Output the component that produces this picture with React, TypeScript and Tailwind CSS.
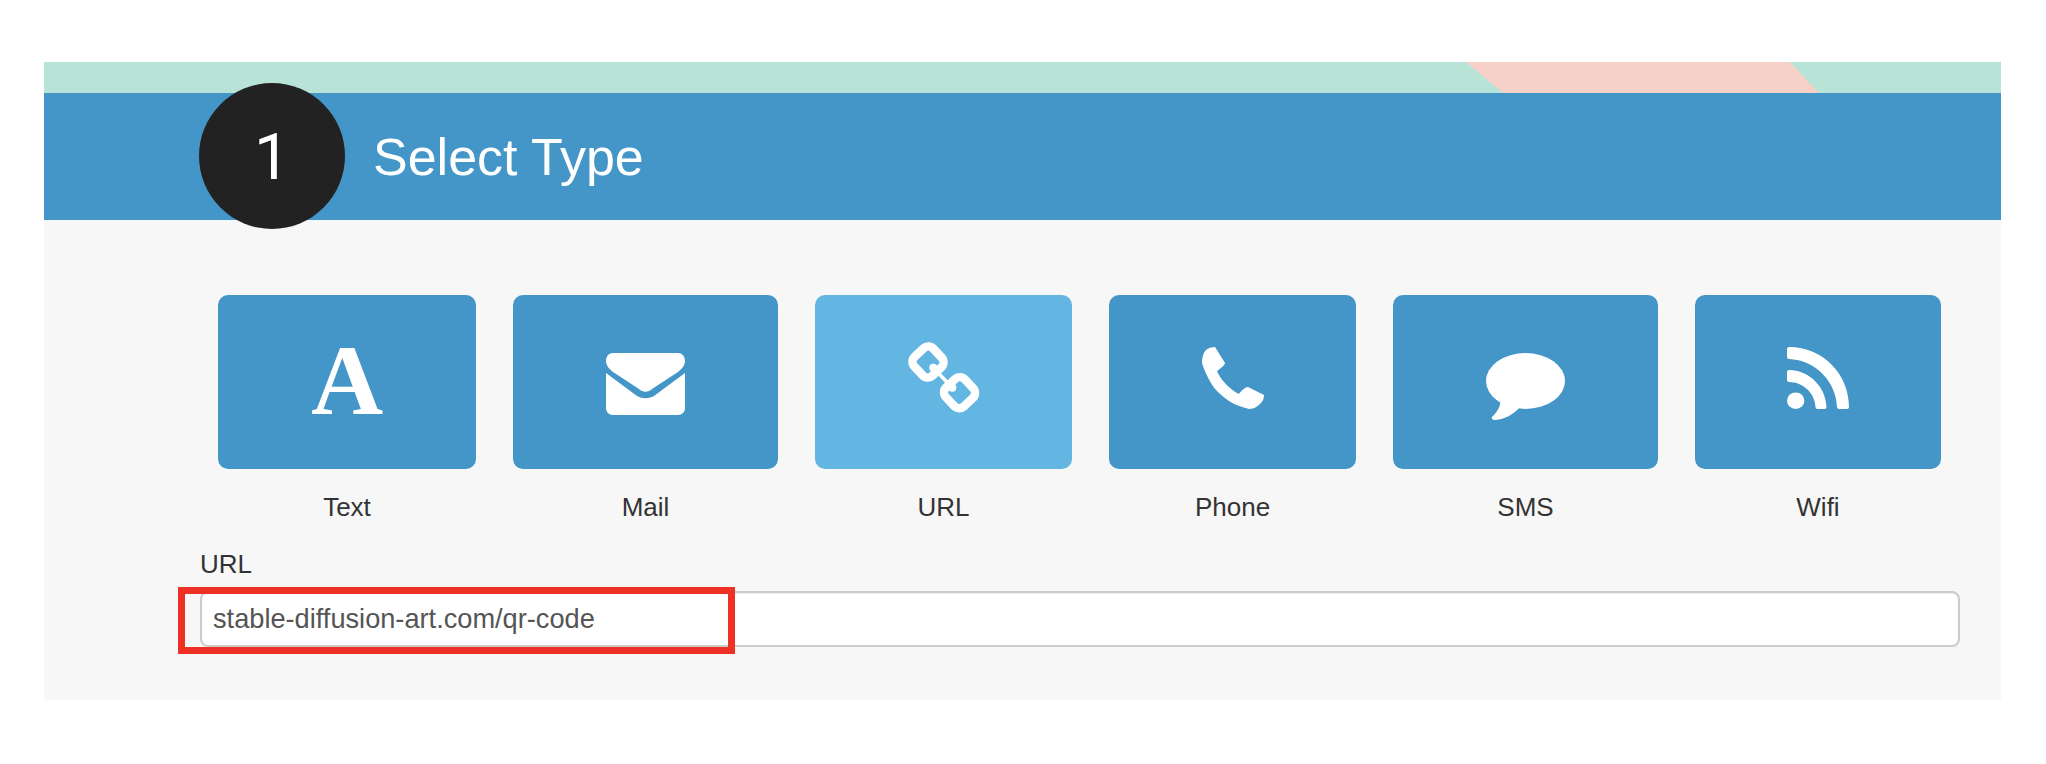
import React from "react";

function MailIcon() {
  return (
    <svg width="79" height="62" viewBox="0 0 79 62" fill="#fff">
      <path d="M7 0H72C76 0 79 3 79 8C79 12 76 16 72 19L46 36C42 39.5 37 39.5 33 36L7 19C3 16 0 12 0 8C0 3 3 0 7 0Z" />
      <path d="M0 20L29 41.5C35 46.5 44 46.5 50 41.5L79 20V55C79 59 76 62 72 62H7C3 62 0 59 0 55Z" />
    </svg>
  );
}

function LinkIcon() {
  return (
    <svg width="72" height="72" viewBox="0 0 72 72" fill="none" stroke="#fff">
      <rect x="7" y="7" width="26" height="26" rx="7" strokeWidth="8.5" transform="rotate(47 20 20)" />
      <rect x="38.5" y="37.7" width="26" height="26" rx="7" strokeWidth="8.5" transform="rotate(47 51.5 50.7)" />
      <path d="M25.3 25.7L44.3 45.7" strokeWidth="3.5" />
      <circle cx="25.3" cy="25.7" r="4" fill="#fff" stroke="none" />
      <circle cx="44.3" cy="45.7" r="4" fill="#fff" stroke="none" />
    </svg>
  );
}

function PhoneIcon() {
  return (
    <svg width="62" height="62" viewBox="0 0 62 62" fill="#fff">
      <path d="M4 3C6 1 10 0 13 0L23 16C23 18 18 22 15 24C18 32 28 43 37 47C39 44 43 40 46 40L62 48C62 51 61 54 59 56C56 59 52 62 47 62C40 60 33 58 27 54C20 49 12 42 9 36C5 29 2 23 0 16C0 11 1 6 4 3Z" />
    </svg>
  );
}

function SmsIcon() {
  return (
    <svg width="79" height="67" viewBox="0 0 79 67" fill="#fff">
      <ellipse cx="39.5" cy="28" rx="39.5" ry="28" />
      <path d="M14 48C15 54 10 60 6 64C5 66 7 67 9 67C19 66 27 62 34 54Z" />
    </svg>
  );
}

function WifiIcon() {
  return (
    <svg width="62" height="62" viewBox="0 0 62 62" fill="#fff">
      <path d="M2 0C36 0 62 27 62 60C62 61 61 62 60 62H52C51 62 50 61 50 60C49 34 28 13 2 12C1 12 0 11 0 10V2C0 1 1 0 2 0Z" />
      <path d="M2 23C22 23 39 40 39.5 60C39.5 61 38.5 62 37.5 62H30.5C29.5 62 28.5 61 28.5 60C28 46 16 35 2 35C1 35 0 34 0 33V25C0 24 1 23 2 23Z" />
      <ellipse cx="8.7" cy="53.7" rx="8.7" ry="8.3" />
    </svg>
  );
}

const items = [
  { label: "Text", width: "w-[258px]", bg: "bg-[#4396c7]", shift: "-translate-y-[1px]", icon: <span className="block font-['Liberation_Serif',serif] font-bold text-[100px] leading-none text-white">A</span> },
  { label: "Mail", width: "w-[265px]", bg: "bg-[#4396c7]", shift: "translate-y-[2px]", icon: <MailIcon /> },
  { label: "URL", width: "w-[257px]", bg: "bg-[#63b6e2]", shift: "-translate-y-[4px]", icon: <LinkIcon /> },
  { label: "Phone", width: "w-[247px]", bg: "bg-[#4396c7]", shift: "-translate-y-[4px]", icon: <PhoneIcon /> },
  { label: "SMS", width: "w-[265px]", bg: "bg-[#4396c7]", shift: "translate-y-[4px]", icon: <SmsIcon /> },
  { label: "Wifi", width: "w-[246px]", bg: "bg-[#4396c7]", shift: "-translate-y-[4px]", icon: <WifiIcon /> },
];

export default function App() {
  return (
    <div className="w-[2046px] h-[764px] bg-white pt-[62px] pl-[44px] overflow-hidden font-['Liberation_Sans',Arial,sans-serif]">
      <div className="w-[1957px]">
        <div className="relative h-[31px] bg-[#b7e4d7] overflow-hidden">
          <svg className="absolute left-0 top-0" width="1957" height="31">
            <polygon points="1422,0 1746,0 1775,31 1459,31" fill="#f7d0c8" />
          </svg>
        </div>
        <div className="h-[127px] bg-[#4396c7] flex pl-[155px]">
          <div className="w-[146px] h-[146px] -mt-[10px] pt-[3px] rounded-full bg-[#222222] flex items-center justify-center text-white font-['Roboto',sans-serif] text-[64px] leading-none shrink-0 relative z-10">
            1
          </div>
          <div className="ml-[28px] h-[127px] flex items-center text-white text-[52px] leading-none">
            Select Type
          </div>
        </div>
        <div className="relative h-[480px] bg-[#f7f7f7] pt-[75px]">
          <div className="flex gap-[37px] pl-[174px]">
            {items.map((it) => (
              <div key={it.label} className={`${it.width} flex flex-col items-center`}>
                <div className={`w-full h-[174px] rounded-[10px] ${it.bg} flex items-center justify-center`}>
                  <div className={it.shift}>{it.icon}</div>
                </div>
                <div className="mt-[23px] h-[30px] text-[26px] leading-[30px] text-[#333333]">{it.label}</div>
              </div>
            ))}
          </div>
          <div className="ml-[156px] mt-[27px] w-[1760px]">
            <div className="text-[26px] leading-[30px] text-[#333333]">URL</div>
            <div className="mt-[12px] h-[56px] bg-white border-2 border-[#cccccc] rounded-[8px] shadow-[inset_0_1px_1px_rgba(0,0,0,0.075)] pl-[11px] flex items-center text-[27.2px] text-[#555555]">
              stable-diffusion-art.com/qr-code
            </div>
          </div>
          <div className="absolute left-[134px] top-[367px] w-[557px] h-[67px] border-[7px] border-[#ee3124]" />
        </div>
      </div>
    </div>
  );
}
